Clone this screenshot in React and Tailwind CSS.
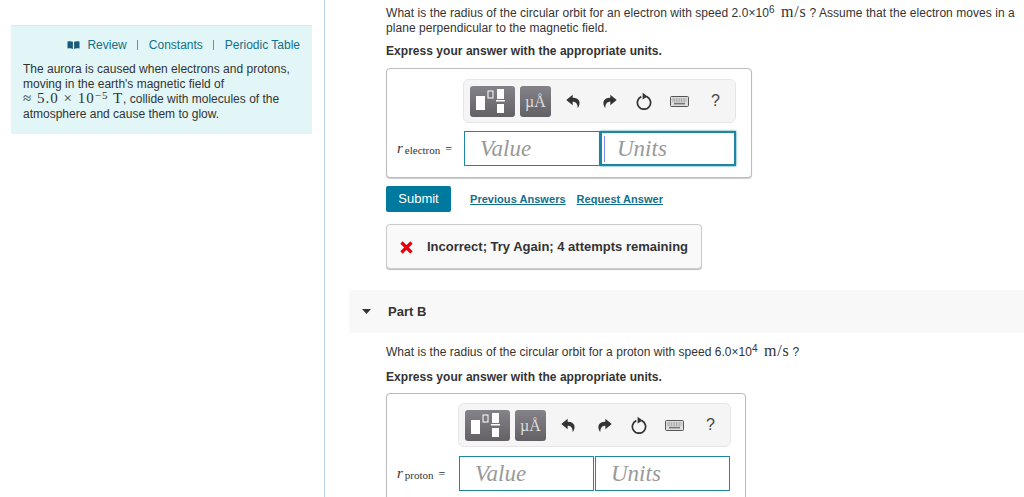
const sans = { fontFamily: '"Liberation Sans", Arial, sans-serif' };

function TemplateButtons() {
  return (
    <div className="flex gap-[5px]">
      <div className="w-[45px] h-[31px] rounded-[3px] bg-gradient-to-b from-[#85838a] to-[#636165] relative">
        <svg width="45" height="31" viewBox="0 0 45 31">
          <rect x="6" y="10" width="9" height="14" fill="#fff" />
          <rect x="18" y="5" width="5" height="7" fill="none" stroke="#fff" strokeWidth="1" />
          <rect x="27" y="3" width="7" height="10" fill="#fff" />
          <rect x="26" y="14" width="9" height="1.5" fill="#fff" />
          <rect x="27" y="18" width="7" height="9" fill="#fff" />
        </svg>
      </div>
      <div className="w-[31px] h-[31px] rounded-[3px] bg-gradient-to-b from-[#85838a] to-[#636165] flex items-center justify-center text-[#dcdcdc] text-[16px] leading-none pt-[1px] font-['Liberation_Serif',serif]">
        µÅ
      </div>
    </div>
  );
}

function UndoIcon({ flip, className }) {
  return (
    <svg width="15" height="15" viewBox="0 0 14 14" className={`${flip ? '-scale-x-100' : ''} ${className}`}>
      <path d="M6.2 0.8 L0.3 5.6 L6.2 10.4 L6.2 7.2 C9.4 7.2 10.8 9 11 13.4 C13.8 9 13.6 3.8 6.2 3.6 Z" fill="#333" />
    </svg>
  );
}

function RefreshIcon({ className }) {
  return (
    <svg width="16" height="18" viewBox="0 0 16 18" className={className}>
      <path d="M5.3 4.6 A6.6 6.6 0 1 0 10.7 4.6" fill="none" stroke="#333" strokeWidth="1.7" />
      <path d="M6.6 0.8 L11.6 4.6 L6.6 7.4 Z" fill="#333" />
    </svg>
  );
}

function KeyboardIcon({ className }) {
  return (
    <svg width="19" height="11" viewBox="0 0 19 11" className={className}>
      <rect x="0.5" y="0.5" width="18" height="10" rx="1" fill="#ddd" stroke="#555" />
      <path d="M2.5 3h14M2.5 5h14" stroke="#777" strokeWidth="1" strokeDasharray="1 0.7" />
      <rect x="4" y="6.8" width="11" height="1.6" fill="#777" />
    </svg>
  );
}

function Toolbar({ className }) {
  return (
    <div className={`w-[273px] h-[44px] rounded-[6px] border border-[#e6e6e6] bg-[#f5f5f5] flex items-center pl-[6px] ${className}`}>
      <TemplateButtons />
      <UndoIcon className="ml-[15px]" />
      <UndoIcon flip className="ml-[21px]" />
      <RefreshIcon className="ml-[19px]" />
      <KeyboardIcon className="ml-[18px]" />
      <span className="ml-[22px] text-[16px] text-[#444] leading-none">?</span>
    </div>
  );
}

function MathInput({ text, active, width }) {
  return (
    <div
      className={`${width} h-[35px] flex items-center bg-white border-[#1d87a3] ${active ? 'border-2 shadow-[0_0_2px_#1d87a3] pl-[2px]' : 'border'} relative`}
    >
      {active && <span className="w-px h-[26px] bg-[#7b8cf0]" />}
      <span className={`${active ? 'pl-[12px]' : 'pl-[15px]'} font-['Liberation_Serif',serif] italic text-[23px] text-[#999] leading-none`}>
        {text}
      </span>
    </div>
  );
}

function AnswerBox({ sub, boxClass, activeUnits, labelW, valueW, unitsW, toolbarClass, rowClass }) {
  return (
    <div className={`border border-[#bbb] rounded-[4px] bg-white shadow-[0_1px_1px_#ccc] ${boxClass}`}>
      <Toolbar className={toolbarClass} />
      <div className={`flex items-center ${rowClass}`}>
        <div className={`${labelW} pl-[10px] flex items-baseline font-['Liberation_Serif',serif] text-[#333] whitespace-nowrap`}>
          <span className="italic text-[15px] leading-none">r</span>
          <span className="text-[11px] leading-none translate-y-[1px] ml-[2px]">{sub}</span>
          <span className="text-[12px] leading-none ml-[5px]">=</span>
        </div>
        <MathInput text="Value" width={valueW} />
        <MathInput text="Units" active={activeUnits} width={unitsW} />
      </div>
    </div>
  );
}

function Unit() {
  return <span className="font-['Liberation_Serif',serif] text-[16px] tracking-[0.8px] leading-none mx-[3px]">m/s</span>;
}

export default function App() {
  return (
    <div className="w-[1024px] h-[497px] flex overflow-hidden bg-white text-[#333] text-[12px]" style={sans}>
      <aside className="w-[325px] shrink-0 border-r border-[#bcd2e6] pt-[25px] pl-[11px] pr-[12px]">
        <div className="h-[109px] bg-[#e2f6f7] border-t border-[#dfe7e8] pl-[12px]">
          <div className="flex items-center justify-end h-[36px] pt-[1px] pr-[12px] text-[#12708a] text-[12px]">
            <svg width="13" height="8" viewBox="0 0 12 8" className="mr-[7px]">
              <path d="M0 0.5 C2 0 4 0 5.4 0.8 V8 C4 7.2 2 7.2 0 7.6 Z M12 0.5 C10 0 8 0 6.6 0.8 V8 C8 7.2 10 7.2 12 7.6 Z" fill="#1a5a78" />
            </svg>
            <span>Review</span>
            <span className="w-px h-[10px] bg-[#888] mx-[10.5px]" />
            <span>Constants</span>
            <span className="w-px h-[10px] bg-[#888] mx-[10.5px]" />
            <span>Periodic Table</span>
          </div>
          <p className="leading-[15px] text-[#333]">
            The aurora is caused when electrons and protons,
            <br />
            moving in the earth's magnetic field of
            <br />
            <span className="font-['Liberation_Serif',serif] text-[15px] tracking-[1px] leading-[10px]">
              ≈ 5.0 × 10<sup className="text-[11px] -top-[4px]">−5</sup> T
            </span>
            , collide with molecules of the
            <br />
            atmosphere and cause them to glow.
          </p>
        </div>
      </aside>

      <main className="flex-1 min-w-0 pl-[24px]">
        <section className="pl-[37px] pt-[4px]">
          <p className="leading-[15px] tracking-[0.05px]">
            What is the radius of the circular orbit for an electron with speed 2.0×10
            <sup className="text-[10px] -top-[4px]">6</sup> <Unit />? Assume that the electron moves in a plane perpendicular to the magnetic field.
          </p>
          <p className="font-bold mt-[7px] leading-[16px] tracking-[0.04px]">Express your answer with the appropriate units.</p>
          <AnswerBox
            sub="electron"
            activeUnits
            boxClass="mt-[9px] w-[366px] h-[110px] pt-[10px]"
            toolbarClass="ml-[76px]"
            rowClass="mt-[8px]"
            labelW="w-[77px]"
            valueW="w-[136px]"
            unitsW="w-[136px]"
          />
          <div className="flex items-start mt-[8px] h-[26px]">
            <button className="w-[65px] h-[26px] bg-[#00799e] rounded-[2px] text-white text-[13px]">Submit</button>
            <a className="ml-[19px] mt-[5px] text-[#12708a] text-[11px] font-bold underline tracking-[0.04px]">Previous Answers</a>
            <a className="ml-[11px] mt-[5px] text-[#12708a] text-[11px] font-bold underline tracking-[0.04px]">Request Answer</a>
          </div>
          <div className="mt-[12px] w-[316px] h-[45px] border border-[#ccc] rounded-[4px] bg-[#f9f9f9] shadow-[0_1px_1px_#bbb] flex items-center pl-[13px] pt-[1px] font-bold text-[13px]">
            <svg width="13" height="13" viewBox="0 0 13 13">
              <path d="M1.5 1.5 L11.5 11.5 M11.5 1.5 L1.5 11.5" stroke="#e8000d" strokeWidth="3.2" />
            </svg>
            <span className="ml-[14px]">Incorrect; Try Again; 4 attempts remaining</span>
          </div>
        </section>

        <div className="mt-[21px] h-[43px] bg-[#f8f8f8] flex items-center pl-[13px] font-bold text-[13px]">
          <svg width="9" height="5" viewBox="0 0 9 5">
            <path d="M0 0 H9 L4.5 5 Z" fill="#333" />
          </svg>
          <span className="ml-[17px]">Part B</span>
        </div>

        <section className="pl-[37px] pr-[8px] pt-[9px]">
          <p className="leading-[20px] tracking-[0.03px]">
            What is the radius of the circular orbit for a proton with speed 6.0×10
            <sup className="text-[10px] -top-[4px]">4</sup> <Unit />?
          </p>
          <p className="font-bold mt-[7px] leading-[16px] tracking-[0.04px]">Express your answer with the appropriate units.</p>
          <AnswerBox
            sub="proton"
            boxClass="mt-[8px] w-[360px] h-[130px] pt-[9px]"
            toolbarClass="ml-[71px]"
            rowClass="mt-[9px]"
            labelW="w-[72px]"
            valueW="w-[135px] mr-[1px]"
            unitsW="w-[135px]"
          />
        </section>
      </main>
    </div>
  );
}
